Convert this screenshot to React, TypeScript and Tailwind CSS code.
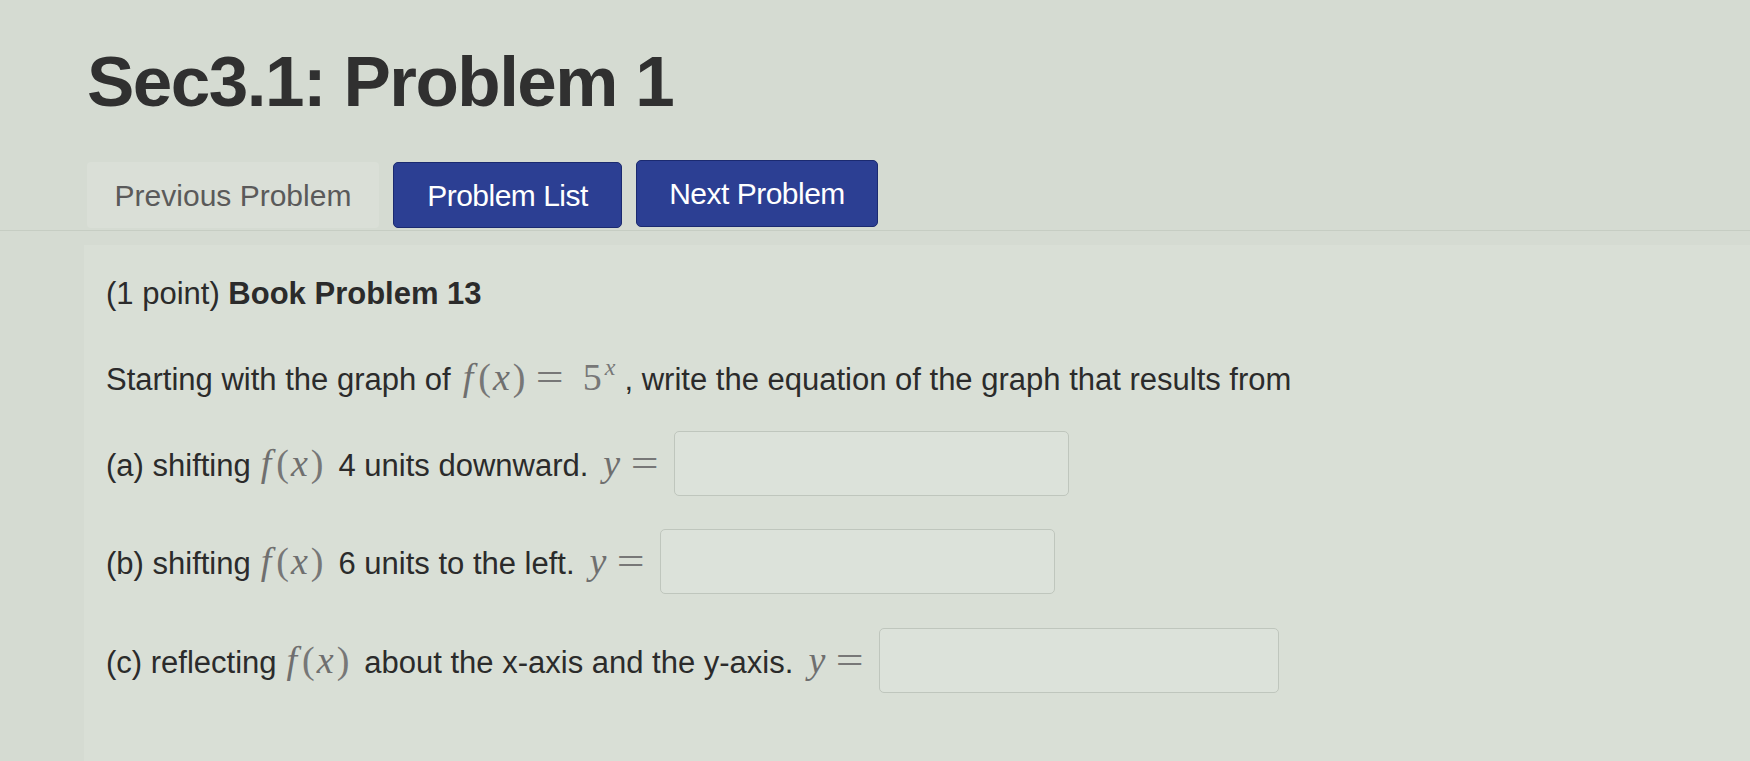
import React from 'react';

const Mi = ({ children, className = '' }: { children: React.ReactNode; className?: string }) => (
  <span className={`italic font-['Liberation_Serif',serif] text-[38px] text-[#6f6f6f] ${className}`}>
    {children}
  </span>
);

const Mo = ({ children, className = '' }: { children: React.ReactNode; className?: string }) => (
  <span className={`font-['Liberation_Serif',serif] text-[38px] font-light text-[#777777] ${className}`}>
    {children}
  </span>
);

const Eq = ({ className = '' }: { className?: string }) => (
  <span className={`inline-block scale-x-130 font-['Liberation_Serif',serif] text-[38px] font-light text-[#777777] ${className}`}>
    =
  </span>
);

const Fx = () => (
  <span className="ml-[10px] mr-[15px] inline-flex items-baseline">
    <Mi>f</Mi>
    <Mo className="ml-[5px]">(</Mo>
    <Mi className="ml-[2px]">x</Mi>
    <Mo className="ml-[3px]">)</Mo>
  </span>
);

const Equals = () => (
  <span className="ml-[15px] inline-flex items-baseline">
    <Mi>y</Mi>
    <Eq className="ml-[14px]" />
  </span>
);

const AnswerBox = ({ width = 'w-[395px]' }: { width?: string }) => (
  <input
    type="text"
    className={`${width} ml-[18px] h-[65px] rounded-[5px] border border-[#bfc6bd] bg-[#dce2da] outline-none`}
  />
);

export default function App() {
  return (
    <div className="min-h-screen w-full overflow-hidden bg-[#d5dbd2] font-['Liberation_Sans',Arial,sans-serif] text-[#2b2b2b]">
      <h1 className="pl-[87px] pt-[46px] text-[71px] font-bold leading-none tracking-[-1.5px] text-[#303030]">
        Sec3.1: Problem 1
      </h1>

      <div className="mt-[45px] flex items-center gap-[14px] border-b border-[#c6cdc3] pb-[2px] pl-[87px]">
        <div className="flex h-[66px] w-[292px] items-center justify-center rounded-[4px] bg-[#dadfd7] text-[30px] text-[#5a5a5a]">
          Previous Problem
        </div>
        <button className="flex h-[66px] w-[229px] items-center justify-center rounded-[5px] border border-[#1b2a70] bg-[#2c3f93] text-[30px] tracking-[-0.5px] text-white">
          Problem List
        </button>
        <button className="-mt-[4px] flex h-[67px] w-[242px] items-center justify-center rounded-[5px] border border-[#1b2a70] bg-[#2c3f93] text-[30px] tracking-[-0.5px] text-white">
          Next Problem
        </button>
      </div>

      <div className="ml-[84px] mt-[14px] min-h-[520px] bg-[#d9dfd6] pl-[22px] pt-[32px] text-[31px] text-[#2b2b2b]">
        <p className="leading-[34px]">
          (1 point) <span className="font-bold">Book Problem 13</span>
        </p>

        <p className="mt-[46px] flex items-baseline leading-[40px]">
          Starting with the graph of
          <span className="ml-[12px] mr-[9px] inline-flex items-baseline">
            <Mi>f</Mi>
            <Mo className="ml-[5px]">(</Mo>
            <Mi className="ml-[2px]">x</Mi>
            <Mo className="ml-[3px]">)</Mo>
            <Eq className="ml-[14px] mr-[22px]" />
            <Mo>5</Mo>
            <span className="relative -top-[15px] ml-[3px] italic font-['Liberation_Serif',serif] text-[24px] text-[#777777]">
              x
            </span>
          </span>
          , write the equation of the graph that results from
        </p>

        <div className="mt-[29px] flex items-center">
          <span className="flex items-baseline">
            (a) shifting
            <Fx />
            4 units downward.
            <Equals />
          </span>
          <AnswerBox />
        </div>

        <div className="mt-[33px] flex items-center">
          <span className="flex items-baseline">
            (b) shifting
            <Fx />
            6 units to the left.
            <Equals />
          </span>
          <AnswerBox />
        </div>

        <div className="mt-[34px] flex items-center">
          <span className="flex items-baseline">
            (c) reflecting
            <Fx />
            about the x-axis and the y-axis.
            <Equals />
          </span>
          <AnswerBox width="w-[400px]" />
        </div>
      </div>
    </div>
  );
}
